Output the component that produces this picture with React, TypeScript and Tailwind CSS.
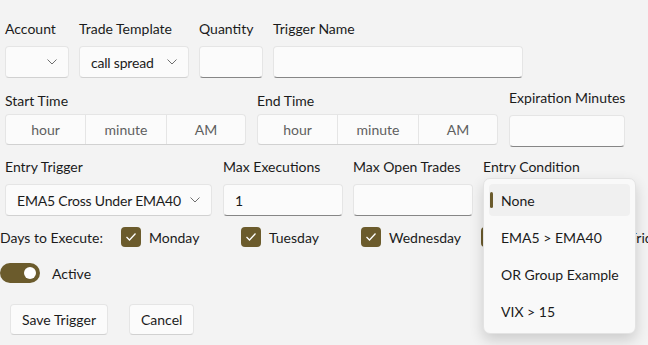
import React from 'react'

const accent = 'bg-[#6b5b2c]'

function Chevron() {
  return (
    <svg width="10" height="6" viewBox="0 0 10 6" className="text-[#6f6f6f] shrink-0 ml-2">
      <polyline points="0.5,0.5 5,5 9.5,0.5" fill="none" stroke="currentColor" strokeWidth="1" />
    </svg>
  )
}

function Combo({ value, width }: { value?: string; width: string }) {
  return (
    <div
      className={`${width} h-8 flex items-center justify-between pl-[11px] pr-[11px] bg-[#fbfbfb] border border-[#e5e5e5] border-b-[#d1d1d1] rounded-[4px]`}
    >
      <span className="whitespace-nowrap tracking-[-0.2px]">{value}</span>
      <Chevron />
    </div>
  )
}

function TextBox({ value, width }: { value?: string; width: string }) {
  return (
    <div
      className={`${width} h-8 flex items-center px-[11px] bg-[#fbfbfb] border border-[#e5e5e5] border-b-[#868686] rounded-[4px]`}
    >
      {value}
    </div>
  )
}

function TimePicker() {
  return (
    <div className="w-[241px] h-[31px] flex bg-[#fbfbfb] border border-[#e5e5e5] border-b-[#d1d1d1] rounded-[4px] text-[#5f5f5f]">
      <div className="w-[80px] flex items-center justify-center border-r border-[#e5e5e5]">hour</div>
      <div className="w-[81px] flex items-center justify-center border-r border-[#e5e5e5]">minute</div>
      <div className="flex-1 flex items-center justify-center">AM</div>
    </div>
  )
}

function Field({ label, children }: { label: string; children: React.ReactNode }) {
  return (
    <div className="flex flex-col">
      <div className="h-5 leading-5 mb-[7px] whitespace-nowrap">{label}</div>
      {children}
    </div>
  )
}

function CheckBox({ label }: { label: string }) {
  return (
    <div className="w-[120px] shrink-0 flex items-center gap-2">
      <div className={`w-5 h-5 shrink-0 rounded-[4px] ${accent} flex items-center justify-center`}>
        <svg width="12" height="10" viewBox="0 0 12 10">
          <polyline points="1.5,5 4.5,8 10.5,1.5" fill="none" stroke="white" strokeWidth="1.3" />
        </svg>
      </div>
      <span className="whitespace-nowrap">{label}</span>
    </div>
  )
}

const days = ['Monday', 'Tuesday', 'Wednesday', 'Thursday', 'Friday']
const conditions = ['None', 'EMA5 > EMA40', 'OR Group Example', 'VIX > 15']

export default function App() {
  return (
    <div
      className="relative w-[648px] h-[345px] overflow-hidden bg-[#f3f3f3] text-[14px] text-[#1b1b1b]"
      style={{ fontFamily: 'Lato, "Open Sans", sans-serif' }}
    >
      <div className="flex gap-[10px] pl-[5px] pt-[19px]">
        <Field label="Account">
          <Combo width="w-[64px]" />
        </Field>
        <Field label="Trade Template">
          <Combo width="w-[110px]" value="call spread" />
        </Field>
        <Field label="Quantity">
          <TextBox width="w-[64px]" />
        </Field>
        <Field label="Trigger Name">
          <TextBox width="w-[250px]" />
        </Field>
      </div>

      <div className="flex gap-[11px] pl-[5px] mt-[10px]">
        <div className="flex flex-col pt-[3px]">
          <div className="h-5 leading-5 mb-[3px]">Start Time</div>
          <TimePicker />
        </div>
        <div className="flex flex-col pt-[3px]">
          <div className="h-5 leading-5 mb-[3px]">End Time</div>
          <TimePicker />
        </div>
        <Field label="Expiration Minutes">
          <TextBox width="w-[116px]" />
        </Field>
      </div>

      <div className="flex pl-[5px] mt-[10px]">
        <div className="mr-[11px]">
          <Field label="Entry Trigger">
            <Combo width="w-[207px]" value="EMA5 Cross Under EMA40" />
          </Field>
        </div>
        <div className="mr-[10px]">
          <Field label="Max Executions">
            <TextBox width="w-[120px]" value="1" />
          </Field>
        </div>
        <div className="mr-[10px]">
          <Field label="Max Open Trades">
            <TextBox width="w-[120px]" />
          </Field>
        </div>
        <Field label="Entry Condition">
          <div className="w-[150px] h-8" />
        </Field>
      </div>

      <div className="flex items-center mt-[11px] h-5 w-max">
        <span className="w-[121px] shrink-0 whitespace-nowrap">Days to Execute:</span>
        {days.map((d) => (
          <CheckBox key={d} label={d} />
        ))}
      </div>

      <div className="flex items-center gap-3 mt-4 h-5">
        <div className={`w-10 h-5 rounded-full ${accent} flex items-center justify-end pr-[4px]`}>
          <div className="w-3 h-3 rounded-full bg-white" />
        </div>
        <span>Active</span>
      </div>

      <div className="flex gap-[21px] pl-[10px] mt-[21px]">
        <button className="h-[31px] px-[11px] bg-[#fbfbfb] border border-[#e5e5e5] border-b-[#d1d1d1] rounded-[4px]">
          Save Trigger
        </button>
        <button className="h-[31px] px-[11px] bg-[#fbfbfb] border border-[#e5e5e5] border-b-[#d1d1d1] rounded-[4px]">
          Cancel
        </button>
      </div>

      <div className="absolute left-[483px] top-[178px] w-[153px] h-[156px] bg-[#f9f9f9] border border-[#e3e3e3] rounded-[7px] shadow-[0_6px_14px_rgba(0,0,0,0.16)] px-[5px] pt-[5px] flex flex-col gap-[5px]">
        {conditions.map((c, i) => (
          <div
            key={c}
            className={`relative h-8 flex items-center pl-[12px] rounded-[4px] ${i === 0 ? 'bg-[#f0f0f0]' : ''}`}
          >
            {i === 0 && <div className={`absolute left-[1px] top-2 w-[3px] h-4 rounded-full ${accent}`} />}
            {c}
          </div>
        ))}
      </div>
    </div>
  )
}
